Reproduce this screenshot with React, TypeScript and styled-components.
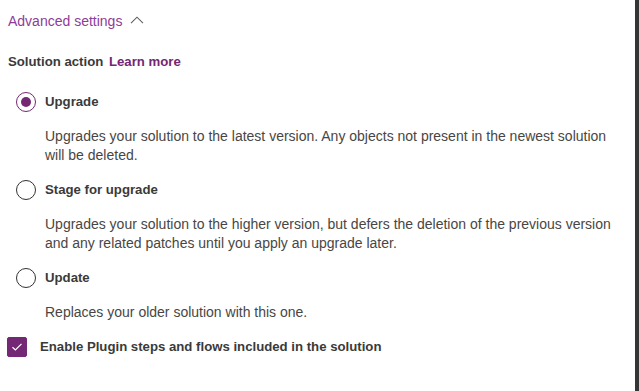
import React, { useState } from 'react';
import styled, { createGlobalStyle } from 'styled-components';

type Option = {
	id: string;
	label: string;
	description: string;
};

const options: Option[] = [
	{
		id: 'upgrade',
		label: 'Upgrade',
		description:
			'Upgrades your solution to the latest version. Any objects not present in the newest solution will be deleted.',
	},
	{
		id: 'stage',
		label: 'Stage for upgrade',
		description:
			'Upgrades your solution to the higher version, but defers the deletion of the previous version and any related patches until you apply an upgrade later.',
	},
	{
		id: 'update',
		label: 'Update',
		description: 'Replaces your older solution with this one.',
	},
];

const App = () => {
	const [selected, setSelected] = useState('upgrade');
	const [enablePlugins, setEnablePlugins] = useState(true);

	return (
		<>
			<GlobalStyle />
			<Page>
				<Panel>
					<SectionToggle type='button'>
						Advanced settings
						<svg width='14' height='8' viewBox='0 0 14 8' fill='none'>
							<path d='M1 7.2 L7 1.2 L13 7.2' stroke='#605e5c' strokeWidth='1.1' />
						</svg>
					</SectionToggle>

					<FieldTitle>
						Solution action <LearnMore href='#'>Learn more</LearnMore>
					</FieldTitle>

					<RadioGroup role='radiogroup'>
						{options.map((opt) => (
							<OptionBlock key={opt.id}>
								<RadioRow onClick={() => setSelected(opt.id)}>
									<RadioCircle checked={selected === opt.id} />
									<OptionLabel>{opt.label}</OptionLabel>
								</RadioRow>
								<OptionText>{opt.description}</OptionText>
							</OptionBlock>
						))}
					</RadioGroup>

					<CheckRow onClick={() => setEnablePlugins(!enablePlugins)}>
						<CheckBox checked={enablePlugins}>
							{enablePlugins && (
								<svg width='12' height='10' viewBox='0 0 12 10' fill='none'>
									<path
										d='M1.5 5.2 L4.4 8 L10.5 1.8'
										stroke='#fff'
										strokeWidth='1.2'
									/>
								</svg>
							)}
						</CheckBox>
						<OptionLabel>Enable Plugin steps and flows included in the solution</OptionLabel>
					</CheckRow>
				</Panel>
				<EdgeBar />
			</Page>
		</>
	);
};

export default App;

const GlobalStyle = createGlobalStyle`
	html, body {
		margin: 0;
		padding: 0;
		background: #fff;
	}
	body {
		font-family: "Segoe UI", "Liberation Sans", Arial, sans-serif;
		font-size: 14px;
		color: #323130;
	}
`;

const Page = styled.div`
	display: flex;
	width: 639px;
	height: 391px;
	overflow: hidden;
`;

const Panel = styled.div`
	flex: 1;
	display: flex;
	flex-direction: column;
	align-items: flex-start;
	padding: 11px 14px 0 8px;
`;

const EdgeBar = styled.div`
	width: 4px;
	background: #353535;
`;

const SectionToggle = styled.button`
	display: flex;
	align-items: center;
	gap: 8px;
	border: none;
	background: none;
	padding: 0;
	font: inherit;
	font-size: 14px;
	line-height: 20px;
	color: #8e3c97;
	cursor: pointer;
	svg {
		margin-top: -2px;
	}
`;

const FieldTitle = styled.div`
	margin-top: 21px;
	line-height: 20px;
	font-size: 13.2px;
	font-weight: 600;
	color: #3b3a39;
`;

const LearnMore = styled.a`
	color: #742774;
	text-decoration: none;
	margin-left: 2px;
`;

const RadioGroup = styled.div`
	margin-top: 20px;
	display: flex;
	flex-direction: column;
`;

const OptionBlock = styled.div`
	display: flex;
	flex-direction: column;
	margin-bottom: 15px;
`;

const RadioRow = styled.div`
	display: flex;
	align-items: center;
	gap: 9px;
	height: 20px;
	padding-left: 8px;
	cursor: pointer;
`;

const RadioCircle = styled.span<{ checked: boolean }>`
	position: relative;
	width: 20px;
	height: 20px;
	box-sizing: border-box;
	border-radius: 50%;
	border: 1px solid ${(p) => (p.checked ? '#742774' : '#323130')};
	&::after {
		content: '';
		display: ${(p) => (p.checked ? 'block' : 'none')};
		position: absolute;
		left: 4px;
		top: 4px;
		width: 10px;
		height: 10px;
		border-radius: 50%;
		background: #742774;
	}
`;

const OptionLabel = styled.span`
	font-size: 13.2px;
	font-weight: 600;
	line-height: 20px;
	color: #3b3a39;
`;

const OptionText = styled.p`
	margin: 15px 0 0 37px;
	max-width: 575px;
	line-height: 19px;
	color: #484644;
`;

const CheckRow = styled.div`
	display: flex;
	align-items: center;
	gap: 13px;
	margin-left: -1px;
	cursor: pointer;
`;

const CheckBox = styled.span<{ checked: boolean }>`
	display: flex;
	align-items: center;
	justify-content: center;
	width: 20px;
	height: 20px;
	box-sizing: border-box;
	border-radius: 2px;
	background: ${(p) => (p.checked ? '#742774' : '#fff')};
	border: 1px solid ${(p) => (p.checked ? '#742774' : '#323130')};
`;
